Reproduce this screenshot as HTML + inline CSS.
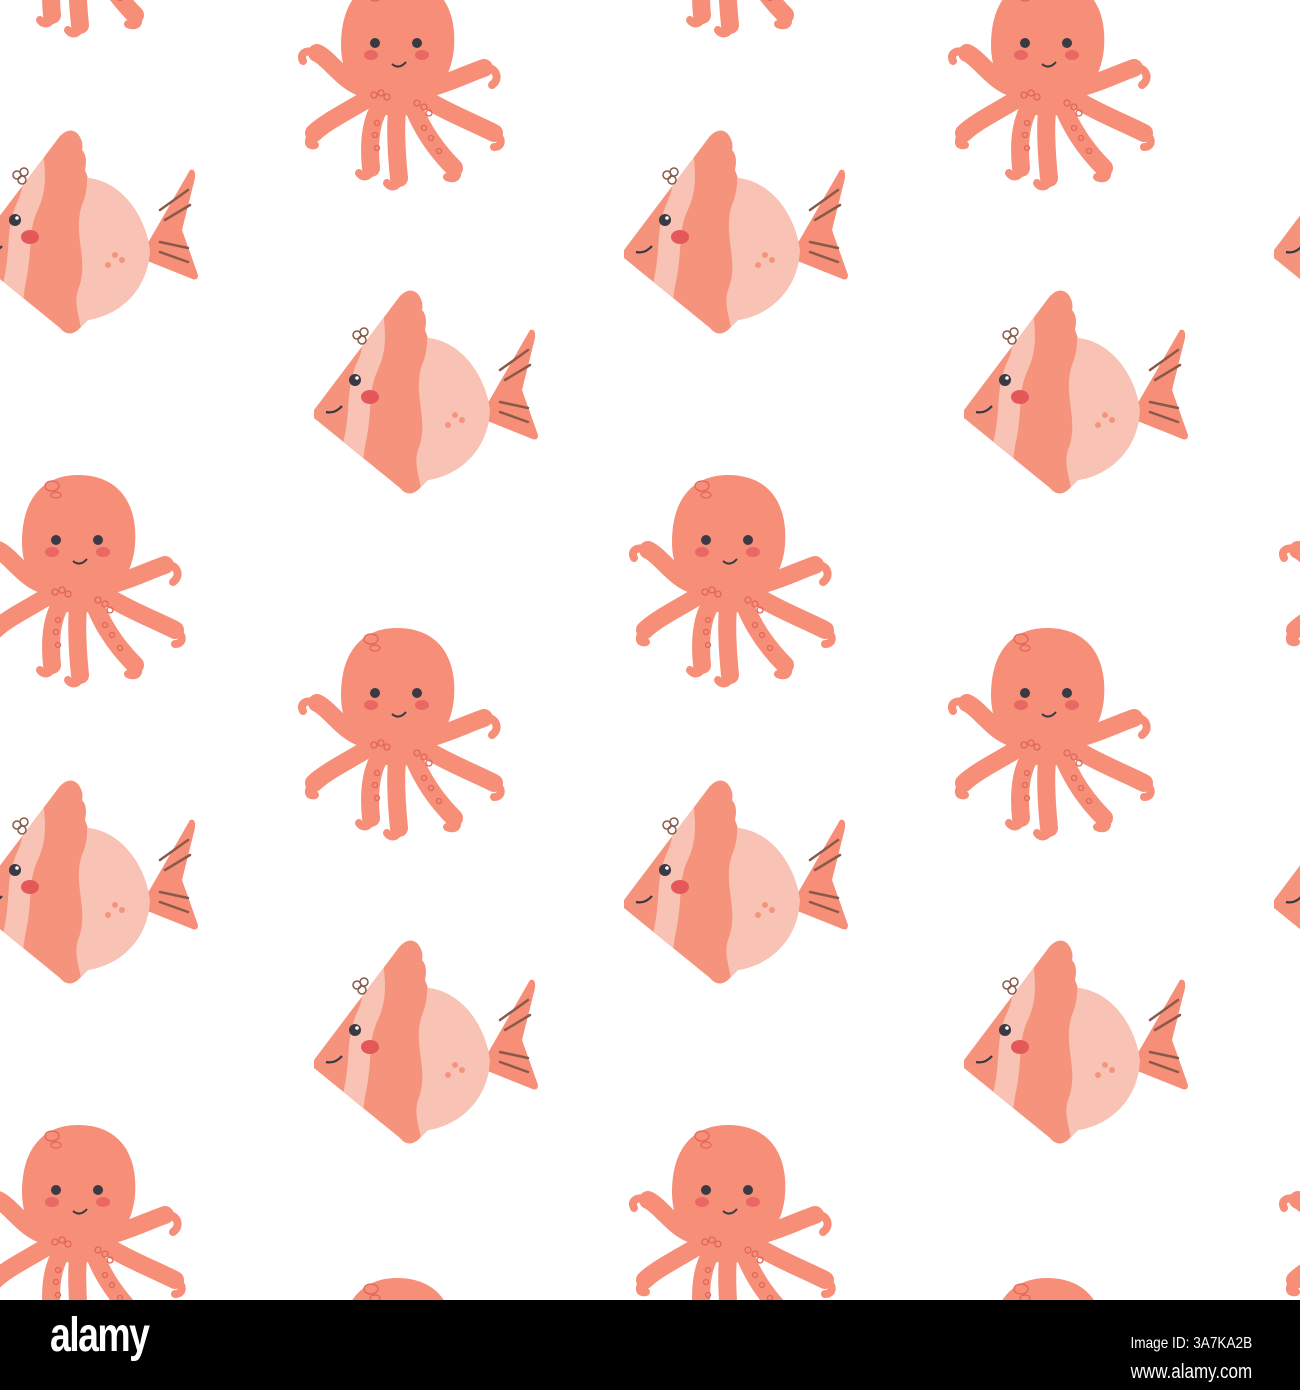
<!DOCTYPE html>
<html><head><meta charset="utf-8"><style>
html,body{margin:0;padding:0;background:#fff;width:1300px;height:1390px;overflow:hidden;position:relative}
.bar{position:absolute;left:0;top:1300px;width:1300px;height:90px;background:#000}
.logo{position:absolute;left:50px;top:1312px;color:#fff;font:bold 48px/1 "Liberation Sans",sans-serif;letter-spacing:-2px;transform:scaleX(.78);transform-origin:left}
.id{position:absolute;right:48px;top:1330px;color:#fff;font:16px/28px "Liberation Sans",sans-serif;text-align:right;transform:scaleX(.85);transform-origin:right}
.id b{font-weight:normal;font-size:20px}
</style></head><body>
<svg width="1300" height="1300" style="position:absolute;left:0;top:0">
<defs>
<g id="oct">
 <g fill="none" stroke="#f68e78" stroke-linecap="round">
  <g stroke-width="18">
  <path d="M75,115 C55,110 40,85 28,80"/>
  <path d="M75,128 C55,140 35,150 25,160"/>
  <path d="M92,132 C80,150 80,175 82,195"/>
  <path d="M108,138 C106,160 108,185 110,205"/>
  <path d="M125,136 C135,160 150,180 165,195"/>
  <path d="M140,128 C160,140 185,150 205,160"/>
  <path d="M140,115 C160,110 180,100 195,95"/>
  </g>
  <g stroke-width="8">
  <path d="M28,80 C18,76 10,80 14,88"/>
  <path d="M25,160 C18,166 18,174 26,172"/>
  <path d="M82,195 C82,204 74,206 70,200"/>
  <path d="M110,205 C110,214 102,216 98,210"/>
  <path d="M165,195 C172,202 166,208 158,204"/>
  <path d="M205,160 C214,164 214,174 205,174"/>
  <path d="M195,95 C207,93 212,106 203,112"/>
  </g>
 </g>
 <path d="M108,5 C150,5 168,35 165,75 C163,100 150,120 135,130 L85,132 C65,120 52,100 52,72 C52,30 72,5 108,5Z" fill="#f68e78"/>
 <ellipse cx="108" cy="125" rx="35" ry="18" fill="#f68e78"/>
 <circle cx="86" cy="70" r="5" fill="#3a3a44"/><circle cx="128" cy="70" r="5" fill="#3a3a44"/>
 <ellipse cx="82" cy="82" rx="7" ry="5" fill="#e4585a" opacity=".7"/><ellipse cx="133" cy="82" rx="7" ry="5" fill="#e4585a" opacity=".7"/>
 <path d="M103,91 Q110,97 117,89" stroke="#3a3a44" stroke-width="2" fill="none"/>
 <g fill="none" stroke="#e0665a" stroke-width="1.3">
  <ellipse cx="82" cy="16" rx="7" ry="5"/><ellipse cx="86" cy="25" rx="5" ry="3"/>
  <circle cx="85" cy="122" r="3"/><circle cx="92" cy="120" r="3"/><circle cx="98" cy="124" r="3"/>
  <circle cx="128" cy="130" r="3"/><circle cx="135" cy="134" r="3"/><circle cx="140" cy="140" r="3"/>
  <circle cx="88" cy="150" r="2.5"/><circle cx="86" cy="162" r="2.5"/><circle cx="88" cy="175" r="2.5"/>
  <circle cx="135" cy="155" r="2.5"/><circle cx="142" cy="165" r="2.5"/><circle cx="150" cy="178" r="2.5"/>
 </g>
</g>
<clipPath id="fb"><path d="M14,130 L100,16 Q110,6 118,14 Q124,22 122,30 Q128,36 125,50 L128,58 C162,62 185,95 190,130 C188,170 160,195 128,200 L118,210 Q108,218 100,208 L14,138 Z"/></clipPath>
<g id="fish">
 <path d="M185,128 L230,50 Q236,48 235,58 L222,110 L238,155 Q238,162 230,158 L185,140Z" fill="#f68e78"/>
 <g stroke="#8a5a48" stroke-width="2.5" fill="none" stroke-linecap="round"><path d="M200,90 L228,70"/><path d="M205,100 L230,85"/><path d="M200,122 L228,128"/><path d="M200,132 L228,142"/></g>
 <g clip-path="url(#fb)">
  <rect x="0" y="0" width="200" height="220" fill="#f6937d"/>
  <path d="M74,0 C66,30 82,55 68,85 C56,110 62,130 55,160 C50,185 52,200 48,220" stroke="#f8c3b4" stroke-width="22" fill="none"/>
  <path d="M128,0 C118,30 135,55 122,85 C112,115 130,140 118,170 C112,190 125,205 120,220 L200,220 L200,0Z" fill="#f8c3b4"/>
 </g>
 <circle cx="55" cy="100" r="6" fill="#3a3a44"/><circle cx="57" cy="98" r="1.8" fill="#fff"/>
 <ellipse cx="70" cy="117" rx="9" ry="7" fill="#e4585a"/>
 <path d="M26,132 Q35,134 42,126" stroke="#3a3a44" stroke-width="2.2" fill="none"/>
 <g fill="none" stroke="#8a5a48" stroke-width="1.5"><circle cx="57" cy="55" r="4"/><circle cx="64" cy="52" r="4"/><circle cx="62" cy="60" r="4"/></g>
 <g fill="#f6937d"><circle cx="155" cy="135" r="3"/><circle cx="162" cy="140" r="3"/><circle cx="148" cy="145" r="3"/></g>
</g>
</defs>
<g>
<use href="#oct" x="-30" y="-180"/><use href="#oct" x="620" y="-180"/>
<use href="#oct" x="289" y="-27"/><use href="#oct" x="939" y="-27"/>
<use href="#oct" x="289" y="623"/><use href="#oct" x="939" y="623"/>
<use href="#oct" x="289" y="1273"/><use href="#oct" x="939" y="1273"/>
<use href="#oct" x="-30" y="470"/><use href="#oct" x="620" y="470"/><use href="#oct" x="1270" y="470"/>
<use href="#oct" x="-30" y="1120"/><use href="#oct" x="620" y="1120"/><use href="#oct" x="1270" y="1120"/>
<use href="#fish" x="-40" y="120"/><use href="#fish" x="610" y="120"/><use href="#fish" x="1260" y="120"/>
<use href="#fish" x="-40" y="770"/><use href="#fish" x="610" y="770"/><use href="#fish" x="1260" y="770"/>
<use href="#fish" x="300" y="280"/><use href="#fish" x="950" y="280"/>
<use href="#fish" x="300" y="930"/><use href="#fish" x="950" y="930"/>
</g>
</svg>
<div class="bar"></div>
<div class="logo">alamy</div>
<div class="id">Image ID: 3A7KA2B<br><b>www.alamy.com</b></div>
</body></html>
